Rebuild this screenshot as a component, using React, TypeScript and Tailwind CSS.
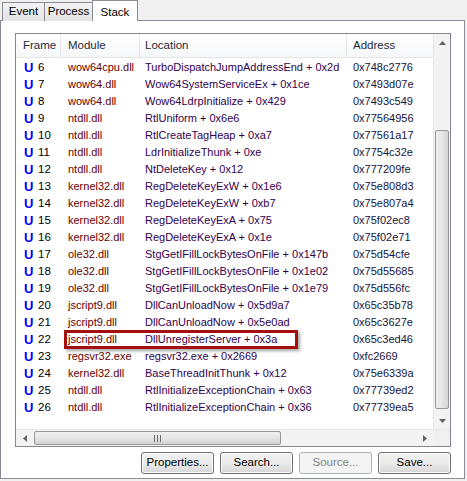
import React from "react";

interface StackFrame {
    frame: number;
    module: string;
    location: string;
    address: string;
}

const frames: StackFrame[] = [
    { frame: 6, module: "wow64cpu.dll", location: "TurboDispatchJumpAddressEnd + 0x2d", address: "0x748c2776" },
    { frame: 7, module: "wow64.dll", location: "Wow64SystemServiceEx + 0x1ce", address: "0x7493d07e" },
    { frame: 8, module: "wow64.dll", location: "Wow64LdrpInitialize + 0x429", address: "0x7493c549" },
    { frame: 9, module: "ntdll.dll", location: "RtlUniform + 0x6e6", address: "0x77564956" },
    { frame: 10, module: "ntdll.dll", location: "RtlCreateTagHeap + 0xa7", address: "0x77561a17" },
    { frame: 11, module: "ntdll.dll", location: "LdrInitializeThunk + 0xe", address: "0x7754c32e" },
    { frame: 12, module: "ntdll.dll", location: "NtDeleteKey + 0x12", address: "0x777209fe" },
    { frame: 13, module: "kernel32.dll", location: "RegDeleteKeyExW + 0x1e6", address: "0x75e808d3" },
    { frame: 14, module: "kernel32.dll", location: "RegDeleteKeyExW + 0xb7", address: "0x75e807a4" },
    { frame: 15, module: "kernel32.dll", location: "RegDeleteKeyExA + 0x75", address: "0x75f02ec8" },
    { frame: 16, module: "kernel32.dll", location: "RegDeleteKeyExA + 0x1e", address: "0x75f02e71" },
    { frame: 17, module: "ole32.dll", location: "StgGetIFillLockBytesOnFile + 0x147b", address: "0x75d54cfe" },
    { frame: 18, module: "ole32.dll", location: "StgGetIFillLockBytesOnFile + 0x1e02", address: "0x75d55685" },
    { frame: 19, module: "ole32.dll", location: "StgGetIFillLockBytesOnFile + 0x1e79", address: "0x75d556fc" },
    { frame: 20, module: "jscript9.dll", location: "DllCanUnloadNow + 0x5d9a7", address: "0x65c35b78" },
    { frame: 21, module: "jscript9.dll", location: "DllCanUnloadNow + 0x5e0ad", address: "0x65c3627e" },
    { frame: 22, module: "jscript9.dll", location: "DllUnregisterServer + 0x3a", address: "0x65c3ed46" },
    { frame: 23, module: "regsvr32.exe", location: "regsvr32.exe + 0x2669", address: "0xfc2669" },
    { frame: 24, module: "kernel32.dll", location: "BaseThreadInitThunk + 0x12", address: "0x75e6339a" },
    { frame: 25, module: "ntdll.dll", location: "RtlInitializeExceptionChain + 0x63", address: "0x77739ed2" },
    { frame: 26, module: "ntdll.dll", location: "RtlInitializeExceptionChain + 0x36", address: "0x77739ea5" },
];

const HIGHLIGHT = 22;

function Arrow({ dir }: { dir: "up" | "down" | "left" | "right" }) {
    const pts = {
        up: "0,4 3.5,0 7,4",
        down: "0,0 3.5,4 7,0",
        left: "4,0 0,3.5 4,7",
        right: "0,0 4,3.5 0,7",
    }[dir];
    const size = dir === "up" || dir === "down" ? { w: 7, h: 4 } : { w: 4, h: 7 };
    return (
        <svg width={size.w} height={size.h} viewBox={`0 0 ${size.w} ${size.h}`}>
            <polygon points={pts} fill="#606060" />
        </svg>
    );
}

function Button({ label, disabled }: { label: string; disabled?: boolean }) {
    return (
        <button
            className={`w-[73px] h-[22px] rounded-[3px] border text-[11.5px] leading-none ${
                disabled
                    ? "border-[#adb2b5] bg-[#f4f4f4] text-[#838383]"
                    : "border-[#707070] bg-gradient-to-b from-[#f2f2f2] via-[#ebebeb] to-[#d6d6d6] text-black shadow-[inset_0_0_0_1px_#fcfcfc]"
            }`}
        >
            {label}
        </button>
    );
}

export default function App() {
    return (
        <div className="w-[467px] h-[481px] bg-[#f0f0f0] flex flex-col font-['Liberation_Sans',Arial,sans-serif] text-[11px] overflow-hidden">
            {/* Tabs */}
            <div className="flex items-end h-[21px] pl-[2px] -mb-px relative z-10 text-[11.5px]">
                <div className="h-[19px] w-[43px] border border-b-0 border-[#898c95] bg-gradient-to-b from-[#f3f3f3] to-[#e3e3e3] flex items-center justify-center text-black">
                    Event
                </div>
                <div className="h-[19px] w-[48px] border border-b-0 border-l-0 border-[#898c95] bg-gradient-to-b from-[#f3f3f3] to-[#e3e3e3] flex items-center justify-center text-black">
                    Process
                </div>
                <div className="h-[21px] w-[46px] border border-b-0 border-[#898c95] bg-white flex items-start pt-[3px] justify-center text-black -ml-px">
                    Stack
                </div>
            </div>

            {/* Panel */}
            <div className="w-[465px] h-[459px] border border-[#898c95] bg-white pt-[12px] pl-[14px]">
                {/* List box */}
                <div className="w-[436px] h-[414px] border border-[#828790] flex flex-col">
                    <div className="flex flex-1 min-h-0">
                        <div className="flex-1 flex flex-col min-w-0">
                            {/* Header */}
                            <div className="flex h-[24px] bg-gradient-to-b from-white to-[#f6f7f8] border-b border-[#e5e5e5] text-[#1e2a3a] text-[11.5px]">
                                <div className="w-[45px] pl-[7px] flex items-center border-r border-[#e5e5e5]">Frame</div>
                                <div className="w-[79px] pl-[7px] flex items-center border-r border-[#e5e5e5]">Module</div>
                                <div className="w-[207px] pl-[5px] flex items-center border-r border-[#e5e5e5]">Location</div>
                                <div className="flex-1 pl-[6px] flex items-center">Address</div>
                            </div>
                            {/* Rows */}
                            <div className="flex flex-col pt-[1px]">
                                {frames.map((f) => (
                                    <div key={f.frame} className="relative flex h-[17px] items-center whitespace-nowrap">
                                        <div className="w-[45px] flex items-center pl-[8px]">
                                            <span className="text-[#0000ff] font-bold text-[13px] w-[14px]">U</span>
                                            <span className="text-black text-[11.5px]">{f.frame}</span>
                                        </div>
                                        <div className="w-[79px] pl-[7px] text-[#660000]">{f.module}</div>
                                        <div className="w-[207px] pl-[5px] text-[#33004f] overflow-hidden">{f.location}</div>
                                        <div className="flex-1 pl-[6px] text-[#14143c]">{f.address}</div>
                                        {f.frame === HIGHLIGHT && (
                                            <div className="absolute left-[48px] top-[-1px] w-[234px] h-[19px] border-[3px] border-[#a50e0e] shadow-[2px_2px_3px_rgba(0,0,0,0.35)]" />
                                        )}
                                    </div>
                                ))}
                            </div>
                        </div>
                        {/* Vertical scrollbar */}
                        <div className="w-[17px] bg-[#f3f3f3] border-l border-[#e8e8e8] flex flex-col">
                            <div className="h-[17px] flex items-center justify-center">
                                <Arrow dir="up" />
                            </div>
                            <div className="flex-1 flex flex-col pt-[79px] pb-[2px] px-[1px]">
                                <div className="h-[279px] rounded-[2px] border border-[#979797] bg-gradient-to-r from-[#f0f0f0] via-[#e6e6e6] to-[#d2d2d2]" />
                            </div>
                            <div className="h-[17px] flex items-center justify-center">
                                <Arrow dir="down" />
                            </div>
                        </div>
                    </div>
                    {/* Horizontal scrollbar */}
                    <div className="h-[17px] flex bg-[#f3f3f3] border-t border-[#e8e8e8]">
                        <div className="w-[17px] flex items-center justify-center">
                            <Arrow dir="left" />
                        </div>
                        <div className="flex-1 flex py-[1px] pl-[1px]">
                            <div className="w-[247px] rounded-[2px] border border-[#979797] bg-gradient-to-b from-[#f0f0f0] via-[#e6e6e6] to-[#d2d2d2] flex items-center justify-center">
                                <svg width="7" height="7" viewBox="0 0 7 7">
                                    <rect x="0" y="0" width="1" height="7" fill="#6a6a6a" />
                                    <rect x="3" y="0" width="1" height="7" fill="#6a6a6a" />
                                    <rect x="6" y="0" width="1" height="7" fill="#6a6a6a" />
                                </svg>
                            </div>
                        </div>
                        <div className="w-[17px] flex items-center justify-center">
                            <Arrow dir="right" />
                        </div>
                        <div className="w-[17px] bg-[#f0f0f0]" />
                    </div>
                </div>

                {/* Buttons */}
                <div className="w-[436px] flex justify-end gap-[6px] mt-[5px]">
                    <Button label="Properties..." />
                    <Button label="Search..." />
                    <Button label="Source..." disabled />
                    <Button label="Save..." />
                </div>
            </div>
        </div>
    );
}
